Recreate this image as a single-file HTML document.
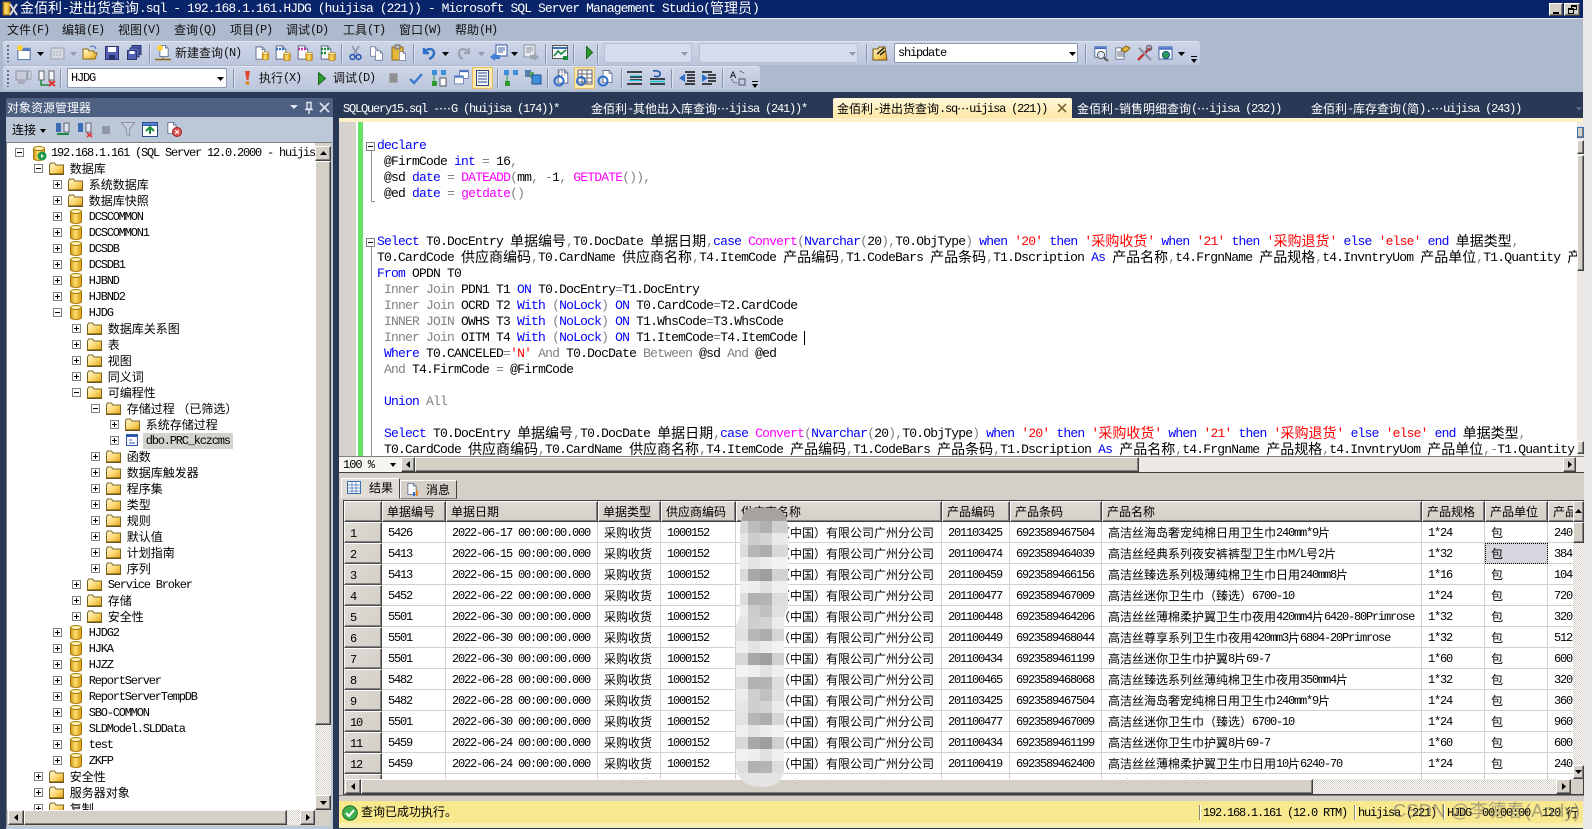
<!DOCTYPE html>
<html lang="zh"><head><meta charset="utf-8"><title>SSMS</title>
<style>
html,body{margin:0;padding:0}
body{width:1592px;height:829px;overflow:hidden;position:relative;background:#293955;font:12px/16px "Liberation Mono",monospace;letter-spacing:-1.2px;color:#000}
u{text-decoration:none;letter-spacing:0;font:12px "WenQuanYi Zen Hei","Noto Sans CJK SC",sans-serif;line-height:0;position:relative;top:1px}
.a{position:absolute;white-space:pre}
.bx{position:absolute;box-sizing:border-box}
svg{position:absolute;overflow:visible}
/* toolbars */
.tb{position:absolute;box-sizing:border-box;background:linear-gradient(#cfd6e8,#bcc6dc);border-radius:3px;box-shadow:inset 0 1px #dfe4f0}
.sp{position:absolute;width:1px;height:19px;background:#8794ad;box-shadow:1px 0 #dde2ee}
.gr{position:absolute;width:2px;height:17px;background:repeating-linear-gradient(#5f6f8c 0 2px,transparent 2px 4px)}
.cb{position:absolute;box-sizing:border-box;background:#fff;border:1px solid #8d99b0;border-radius:2px}
.cd{position:absolute;box-sizing:border-box;background:#d6deee;border:1px solid #b4bfd3;border-radius:2px}
.dn{position:absolute;width:7px;height:4px;background:#000;clip-path:polygon(0 0,100% 0,50% 100%)}
.gy{background:#8f9ab0}
/* tree */
#tree{position:absolute;left:7px;top:143px;width:308px;height:667px;overflow:hidden;background:#fff}
.r{position:relative;height:16px;white-space:pre}
.r:first-child{margin-top:2px}
.l0{--l:0}.l1{--l:1}.l2{--l:2}.l3{--l:3}.l4{--l:4}.l5{--l:5}
.x{position:absolute;left:calc(var(--l)*19px + 8px);top:3px;width:9px;height:9px;box-sizing:border-box;border:1px solid #808080;background:#fff}
.x::before{content:"";position:absolute;left:1px;top:3px;width:5px;height:1px;background:#000}
.p::after{content:"";position:absolute;left:3px;top:1px;width:1px;height:5px;background:#000}
.r svg{left:calc(var(--l)*19px + 23px);top:1px}
.r span{position:absolute;left:calc(var(--l)*19px + 43.7px);top:0}
/* classic bevel */
.b{position:absolute;box-sizing:border-box;background:#d4d0c8;border:1px solid;border-color:#fff #404040 #404040 #fff;box-shadow:inset -1px -1px #808080}
.ck{position:absolute;background:repeating-conic-gradient(#fff 0 25%,#d4d0c8 0 50%) 0 0/2px 2px}
.ar{position:absolute;background:#000}
.au{width:7px;height:4px;clip-path:polygon(50% 0,100% 100%,0 100%)}
.ad{width:7px;height:4px;clip-path:polygon(0 0,100% 0,50% 100%)}
.al{width:4px;height:7px;clip-path:polygon(100% 0,100% 100%,0 50%)}
.arr{width:4px;height:7px;clip-path:polygon(0 0,100% 50%,0 100%)}
/* tabs */
.tab{position:absolute;top:101px;color:#fff;white-space:pre;line-height:16px}
.tab u{color:inherit}
/* editor */
.e{position:absolute;left:377px;white-space:pre;line-height:16px;font-size:13px;letter-spacing:-.8px}
.e u{font-size:14px}
.e b{font-weight:normal;color:#00f}.e i{font-style:normal;color:#f0f}.e s{text-decoration:none;color:#808080}.e em{font-style:normal;color:#f00}.e em u{color:#f00}
/* grid */
#g{position:absolute;left:344px;top:501px;width:1229px;height:278px;overflow:hidden;background:#fff}
#g table{border-collapse:separate;border-spacing:0;table-layout:fixed;width:1264px}
#g th,#g td{box-sizing:border-box;padding:0;white-space:pre;overflow:hidden;font-weight:normal;text-align:left}
#g th{height:21px;background:linear-gradient(#dedad4,#d4d0c8);border:1px solid;border-color:#fff #404040 #404040 #fff;padding:1px 0 0 4px;box-shadow:inset -1px -1px #808080}
#g td{height:21px;padding:2px 0 0 6px;border-right:1px solid #d4d0c8;border-bottom:1px solid #d4d0c8}
#g td.h{background:linear-gradient(135deg,#dedad4,#d4d0c8);border:1px solid;border-color:#fff #404040 #505050 #fff;padding:2px 0 0 5px;box-shadow:inset -1px -1px #808080}
#g td.s{padding-left:42px}
#g tr.z td.sel{background:#d6d6de;outline:1px dotted #000;outline-offset:-1px}
</style></head><body>
<svg width="0" height="0" style="position:absolute">
<defs>
<linearGradient id="fg" x1="0" y1="0" x2="1" y2="1"><stop offset="0" stop-color="#fff7d6"/><stop offset=".55" stop-color="#fbd56a"/><stop offset="1" stop-color="#d99a12"/></linearGradient>
<linearGradient id="dg" x1="0" y1="0" x2="1" y2="0"><stop offset="0" stop-color="#c98c0c"/><stop offset=".4" stop-color="#ffdf70"/><stop offset="1" stop-color="#d99a12"/></linearGradient>
<linearGradient id="bl" x1="0" y1="0" x2="0" y2="1"><stop offset="0" stop-color="#6f9ae0"/><stop offset="1" stop-color="#2a55b0"/></linearGradient>
<symbol id="fo" viewBox="0 0 15 13"><path d="M.5 3V12.5H14.5V3H7L5.5 1H1.5Z" fill="url(#fg)" stroke="#7c6320"/><path d="M1 12H14.5" stroke="#5a4310"/></symbol>
<symbol id="db" viewBox="0 0 12 15"><path d="M.5 2.5V12.5C.5 15 11.5 15 11.5 12.5V2.5Z" fill="url(#dg)" stroke="#a87808"/><ellipse cx="6" cy="2.5" rx="5.5" ry="2" fill="#fff2b8" stroke="#a87808"/></symbol>
<symbol id="doc" viewBox="0 0 16 16"><path d="M2.5 .5H10L13.5 4V15.5H2.5Z" fill="#fff" stroke="#4d5f86"/><path d="M10 .5V4H13.5" fill="#c9d3e6" stroke="#4d5f86"/></symbol>
<symbol id="win" viewBox="0 0 16 16"><rect x="1" y="2" width="14" height="13" fill="#fff" stroke="#3d5f9e"/><rect x="1" y="2" width="14" height="3" fill="url(#bl)"/></symbol>
</defs></svg>

<!-- right light strip -->
<div class="bx" style="left:1583px;top:0;width:9px;height:829px;background:#e9e8e6"></div>

<!-- title -->
<div class="bx" style="left:0;top:0;width:1583px;height:18px;background:#0a246a"></div>
<svg style="left:2px;top:1px" width="16" height="16"><rect x="1" y="1" width="7" height="13" fill="url(#dg)" stroke="#8a6a10"/><path d="M8 3L15 14M15 3L8 14" stroke="#ddd" stroke-width="2"/></svg>
<div class="a" style="left:20px;top:1px;color:#fff;font-size:13px;letter-spacing:-.92px"><u style="font-size:14px;color:#fff">金佰利</u>-<u style="font-size:14px;color:#fff">进出货查询</u>.sql - 192.168.1.161.HJDG (huijisa (221)) - Microsoft SQL Server Management Studio(<u style="font-size:14px;color:#fff">管理员</u>)</div>
<div class="b" style="left:1549px;top:3px;width:14px;height:13px"><div class="bx" style="left:3px;top:8px;width:6px;height:2px;background:#000"></div></div>
<div class="b" style="left:1564px;top:3px;width:16px;height:13px"><div class="bx" style="left:6px;top:1px;width:6px;height:5px;border:1px solid #000;border-top-width:2px"></div><div class="bx" style="left:3px;top:4px;width:6px;height:6px;border:1px solid #000;border-top-width:2px;background:#d4d0c8"></div></div>

<!-- menu + toolbars backdrop -->
<div class="bx" style="left:0;top:18px;width:1583px;height:74px;background:#adb9cd;border-top:1px solid #e8ebf2"></div>
<div class="bx" style="left:0;top:92px;width:1583px;height:26px;background:#293955"></div>
<div class="a" style="left:7px;top:22px;color:#111"><u>文件</u>(F)</div>
<div class="a" style="left:62px;top:22px;color:#111"><u>编辑</u>(E)</div>
<div class="a" style="left:118px;top:22px;color:#111"><u>视图</u>(V)</div>
<div class="a" style="left:174px;top:22px;color:#111"><u>查询</u>(Q)</div>
<div class="a" style="left:230px;top:22px;color:#111"><u>项目</u>(P)</div>
<div class="a" style="left:286px;top:22px;color:#111"><u>调试</u>(D)</div>
<div class="a" style="left:343px;top:22px;color:#111"><u>工具</u>(T)</div>
<div class="a" style="left:399px;top:22px;color:#111"><u>窗口</u>(W)</div>
<div class="a" style="left:455px;top:22px;color:#111"><u>帮助</u>(H)</div>

<div class="tb" style="left:3px;top:41px;width:1197px;height:24px"></div>
<div class="tb" style="left:3px;top:66px;width:757px;height:24px"></div>
<div class="gr" style="left:7px;top:45px"></div>
<div class="gr" style="left:7px;top:70px"></div>

<!-- toolbar 1 icons -->
<svg style="left:16px;top:45px" width="16" height="16"><use href="#win" width="14" height="15" x="1" y="1"/><circle cx="4" cy="3" r="3" fill="#fbd23c"/></svg><div class="dn" style="left:37px;top:52px"></div>
<svg style="left:50px;top:46px" width="14" height="14"><rect x="1" y="2" width="13" height="11" fill="#d5d9e2" stroke="#9aa2b2"/><path d="M3 6h9M3 9h9" stroke="#aab" stroke-dasharray="2 1"/></svg><div class="dn gy" style="left:70px;top:52px"></div>
<svg style="left:82px;top:45px" width="16" height="15"><path d="M1 14V4H6L7 6H12V8H15L13 14Z" fill="url(#fg)" stroke="#8a6a10"/><path d="M8 2C11 0 13 1 14 4" fill="none" stroke="#3d6fb5"/></svg>
<svg style="left:105px;top:46px" width="14" height="14"><rect x=".5" y=".5" width="13" height="13" fill="#5160b0" stroke="#2c3470"/><rect x="3" y="1" width="8" height="5" fill="#fff"/><rect x="4" y="9" width="6" height="4" fill="#26306a"/></svg>
<svg style="left:127px;top:45px" width="15" height="15"><rect x="5" y=".5" width="9" height="9" fill="#5160b0" stroke="#2c3470"/><rect x="3" y="3" width="9" height="9" fill="#6170c0" stroke="#2c3470"/><rect x=".5" y="5.5" width="9" height="9" fill="#5160b0" stroke="#2c3470"/><rect x="2.5" y="6" width="5" height="3" fill="#fff"/></svg>
<div class="sp" style="left:149px;top:44px"></div>
<svg style="left:155px;top:45px" width="17" height="16"><use href="#doc" width="12" height="12" x="3" y="0"/><circle cx="5" cy="3" r="3" fill="#fbd23c"/><path d="M0 14.5H16" stroke="#8a6a10" stroke-width="1.5"/><path d="M8 12v3" stroke="#8a6a10"/></svg>
<div class="a" style="left:175px;top:45px;color:#111"><u>新建查询</u>(N)</div>
<svg style="left:254px;top:45px" width="15" height="16"><use href="#doc" width="13" height="16"/><use href="#db" width="7" height="10" x="8" y="6"/></svg>
<svg style="left:274px;top:45px" width="17" height="16"><use href="#doc" width="14" height="15"/><use href="#db" width="8" height="9" x="9" y="7"/><path d="M2 4h9" stroke="#2a6fd0" stroke-width="2.4" stroke-dasharray="2 1"/></svg>
<svg style="left:296px;top:45px" width="17" height="16"><use href="#doc" width="14" height="15"/><use href="#db" width="8" height="9" x="9" y="7"/><path d="M2 4h9" stroke="#c02ab0" stroke-width="2.4" stroke-dasharray="2 1"/></svg>
<svg style="left:319px;top:45px" width="17" height="16"><use href="#doc" width="14" height="15"/><use href="#db" width="8" height="9" x="9" y="7"/><path d="M2 4h9M2 8h5" stroke="#1c8a3c" stroke-width="2.4" stroke-dasharray="2 1"/></svg>
<div class="sp" style="left:341px;top:44px"></div>
<svg style="left:349px;top:45px" width="13" height="16"><path d="M3 1L8 9M10 1L5 9" stroke="#8a94a8" stroke-width="1.6"/><circle cx="3.5" cy="12" r="2.4" fill="none" stroke="#2a55b0" stroke-width="1.6"/><circle cx="9.5" cy="12" r="2.4" fill="none" stroke="#2a55b0" stroke-width="1.6"/></svg>
<svg style="left:369px;top:46px" width="16" height="15"><use href="#doc" width="10" height="11"/><use href="#doc" width="10" height="11" x="5" y="4"/></svg>
<svg style="left:391px;top:45px" width="17" height="16"><rect x="1" y="2" width="11" height="13" fill="#e6b93d" stroke="#8a6a10"/><rect x="4" y="0" width="5" height="4" fill="#bbb" stroke="#666"/><use href="#doc" width="9" height="10" x="7" y="6"/></svg>
<div class="sp" style="left:413px;top:44px"></div>
<svg style="left:421px;top:45px" width="16" height="15"><path d="M3 3V8H8M3.5 7.5C6 3 12 3 13 7C13.5 10 11 13 8 14" fill="none" stroke="#2d6ec8" stroke-width="2.4"/></svg><div class="dn" style="left:442px;top:52px"></div>
<svg style="left:457px;top:45px" width="13" height="15"><path d="M12 3V8H7M11.5 7.5C9 3 3 3 2 7C1.5 10 3 13 6 14" fill="none" stroke="#9aa3b2" stroke-width="2.2"/></svg><div class="dn gy" style="left:478px;top:52px"></div>
<svg style="left:490px;top:45px" width="18" height="16"><rect x="6" y="0" width="11" height="11" fill="#fff" stroke="#2d55a8"/><path d="M8 3h7M8 5h7M8 7h5" stroke="#2d55a8"/><path d="M0 12L5 8V10H10V14H5V16Z" fill="#3d7ed8"/></svg><div class="dn" style="left:511px;top:52px"></div>
<svg style="left:523px;top:45px" width="17" height="16"><rect x="1" y="0" width="11" height="12" fill="#e6e8ee" stroke="#8d95a6"/><path d="M3 3h7M3 5h7M3 7h5" stroke="#8d95a6"/><path d="M16 12L11 8V10H7V14H11V16Z" fill="#9aa3b2"/></svg>
<div class="sp" style="left:545px;top:44px"></div>
<svg style="left:552px;top:45px" width="17" height="16"><rect x=".5" y=".5" width="15" height="13" fill="#f4f6fb" stroke="#555"/><path d="M1 3h14" stroke="#3d6fb5" stroke-width="2"/><path d="M2 11L6 6L9 9L14 5" fill="none" stroke="#1c8a3c" stroke-width="1.6"/><rect x="11" y="11" width="5" height="4" fill="#1c8a3c"/></svg>
<div class="sp" style="left:573px;top:44px"></div>
<svg style="left:586px;top:46px" width="7" height="13"><path d="M.5 .5L6.5 6.5L.5 12.5Z" fill="#2e9a2e" stroke="#1d6b1d"/></svg>
<div class="sp" style="left:597px;top:44px"></div>
<div class="cd" style="left:604px;top:43px;width:88px;height:20px"></div><div class="dn gy" style="left:681px;top:52px"></div>
<div class="cd" style="left:699px;top:43px;width:159px;height:20px"></div><div class="dn gy" style="left:849px;top:52px"></div>
<div class="sp" style="left:866px;top:44px"></div>
<svg style="left:872px;top:45px" width="16" height="16"><path d="M1 15V4H6L7 2H13L15 15Z" fill="url(#fg)" stroke="#6c5210"/><path d="M5 9L12 3M8 10L13 6" stroke="#222" stroke-width="1.5"/></svg>
<div class="cb" style="left:894px;top:43px;width:184px;height:20px"></div>
<div class="a" style="left:898px;top:45px">shipdate</div><div class="dn" style="left:1069px;top:52px"></div>
<div class="sp" style="left:1085px;top:44px"></div>
<svg style="left:1092px;top:45px" width="17" height="17"><use href="#win" width="15" height="13" x="1"/><circle cx="9" cy="10" r="3.6" fill="#dfeaf8" stroke="#555"/><path d="M12 13L16 16" stroke="#555" stroke-width="2"/></svg>
<svg style="left:1114px;top:45px" width="17" height="16"><use href="#doc" width="12" height="15" y="1"/><path d="M3 7h7M3 9h7M3 11h7" stroke="#667"/><path d="M7 5L12 1L16 3L12 7Z" fill="#e6b93d" stroke="#8a6a10"/></svg>
<svg style="left:1136px;top:45px" width="17" height="16"><path d="M2 15L14 3" stroke="#c03030" stroke-width="2.4"/><path d="M3 3L15 15" stroke="#8d95a6" stroke-width="2.4"/><circle cx="13" cy="3" r="2.6" fill="none" stroke="#667" stroke-width="1.4"/></svg>
<svg style="left:1158px;top:45px" width="16" height="16"><use href="#win" width="15" height="15"/><circle cx="8" cy="10" r="3.6" fill="#2e9a5a" stroke="#1d4f9a"/></svg><div class="dn" style="left:1178px;top:52px"></div>
<div class="bx" style="left:1191px;top:56px;width:6px;height:1px;background:#000"></div><div class="dn" style="left:1191px;top:59px;width:6px"></div>

<!-- toolbar 2 -->
<svg style="left:15px;top:70px" width="17" height="16"><rect x="1" y="1" width="11" height="9" fill="#c8ccd6" stroke="#8d95a6"/><rect x="3" y="11" width="7" height="3" fill="#aab"/><rect x="13" y="1" width="3" height="8" fill="#d5d9e2" stroke="#9aa2b2"/></svg>
<svg style="left:38px;top:70px" width="18" height="17"><rect x="1" y="1" width="5" height="9" fill="#f4f6fb" stroke="#666"/><rect x="11" y="1" width="5" height="9" fill="#f4f6fb" stroke="#666"/><path d="M3 10V15H13" fill="none" stroke="#1c8a3c" stroke-width="1.5"/><path d="M11 11L17 16M17 11L11 16" stroke="#e03030" stroke-width="2"/></svg>
<div class="sp" style="left:60px;top:69px"></div>
<div class="cb" style="left:67px;top:68px;width:160px;height:20px"></div>
<div class="a" style="left:71px;top:70px">HJDG</div><div class="dn" style="left:217px;top:77px"></div>
<div class="sp" style="left:233px;top:69px"></div>
<svg style="left:244px;top:70px" width="7" height="16"><path d="M1 1H6L4.5 10H2.5Z" fill="#e04a30"/><circle cx="3.5" cy="13" r="2" fill="#e08a30"/></svg>
<div class="a" style="left:259px;top:70px;color:#111"><u>执行</u>(X)</div>
<svg style="left:318px;top:72px" width="8" height="13"><path d="M.5 .5L7.5 6.5L.5 12.5Z" fill="#2e9a2e" stroke="#1d6b1d"/></svg>
<div class="a" style="left:333px;top:70px;color:#111"><u>调试</u>(D)</div>
<div class="bx" style="left:389px;top:73px;width:9px;height:10px;background:#8f8f8f;border:1px solid #a8a8b0"></div>
<svg style="left:409px;top:72px" width="14" height="13"><path d="M1 7L5 11L13 2" fill="none" stroke="#3a7ad0" stroke-width="2.4"/></svg>
<svg style="left:431px;top:69px" width="16" height="18"><rect x="1" y="1" width="5" height="5" fill="#3d8fd8"/><rect x="10" y="1" width="5" height="5" fill="#3d8fd8"/><rect x="1" y="12" width="5" height="5" fill="#2e9a2e"/><rect x="9" y="9" width="6" height="8" fill="#fff" stroke="#556"/><path d="M3 6V12" stroke="#2e9a2e"/></svg>
<svg style="left:454px;top:69px" width="15" height="17"><use href="#win" width="10" height="10" x="5"/><use href="#win" width="10" height="11" x="0" y="5"/></svg>
<div class="bx" style="left:472px;top:67px;width:21px;height:22px;background:#ffe9ab;border:1px solid #e2bd62"></div>
<svg style="left:476px;top:70px" width="13" height="16"><rect x=".5" y=".5" width="12" height="15" fill="#f4f6fb" stroke="#2d4a88"/><path d="M2 3h9M2 6h9M2 9h9M2 12h9" stroke="#2d4a88"/></svg>
<div class="sp" style="left:497px;top:69px"></div>
<svg style="left:504px;top:69px" width="15" height="18"><rect x="0" y="1" width="5" height="5" fill="#3d8fd8"/><rect x="9" y="1" width="5" height="5" fill="#3d8fd8"/><rect x="1" y="12" width="5" height="5" fill="#2e9a2e"/><path d="M3 6V12" stroke="#2e9a2e"/></svg>
<svg style="left:525px;top:69px" width="17" height="17"><rect x="0" y="1" width="6" height="7" fill="#5a7ca8"/><rect x="5" y="3" width="4" height="6" fill="#5aa85a"/><rect x="7" y="6" width="9" height="9" fill="#3d8fd8" stroke="#1d4f9a"/></svg>
<div class="sp" style="left:547px;top:69px"></div>
<svg style="left:553px;top:69px" width="17" height="18"><use href="#doc" width="14" height="15" x="3"/><path d="M5 3h7M5 6h7" stroke="#667" stroke-dasharray="2 1"/><circle cx="6" cy="12" r="4.5" fill="none" stroke="#2d6ec8" stroke-width="2"/></svg>
<div class="bx" style="left:574px;top:67px;width:21px;height:22px;background:#ffe9ab;border:1px solid #e2bd62"></div>
<svg style="left:576px;top:69px" width="17" height="18"><rect x="2" y="1" width="14" height="14" fill="#fff" stroke="#667"/><path d="M2 5h14M2 9h14M2 13h14M6 1v14M11 1v14" stroke="#667"/><circle cx="5" cy="12" r="4" fill="none" stroke="#2d6ec8" stroke-width="2"/></svg>
<svg style="left:598px;top:69px" width="16" height="18"><use href="#doc" width="13" height="15" x="3"/><circle cx="5" cy="12" r="4.5" fill="none" stroke="#2d6ec8" stroke-width="2"/></svg>
<div class="sp" style="left:621px;top:69px"></div>
<svg style="left:627px;top:71px" width="15" height="14"><path d="M0 1h15M3 6h12M3 9h12M0 13h15" stroke="#111" stroke-width="1.4"/><path d="M3 5h11" stroke="#18c4d4" stroke-width="1"/><path d="M2 9.5h12" stroke="#18c4d4"/></svg>
<svg style="left:650px;top:70px" width="15" height="15"><path d="M3 1C8 0 11 2 10 5C9 7 6 7 4 6" fill="none" stroke="#1f4fa8" stroke-width="1.5"/><path d="M0 9h15M0 14h15" stroke="#111" stroke-width="1.4"/><path d="M0 11.5h15" stroke="#18c4d4" stroke-width="1.4"/></svg>
<div class="sp" style="left:671px;top:69px"></div>
<svg style="left:679px;top:71px" width="17" height="14"><path d="M6 1h10M8 4h8M8 7h8M8 10h8M6 13h10" stroke="#111" stroke-width="1.4"/><path d="M0 7L6 3V11Z" fill="#2d6ec8"/></svg>
<svg style="left:701px;top:71px" width="17" height="14"><path d="M1 1h10M7 4h8M7 7h8M7 10h8M1 13h10" stroke="#111" stroke-width="1.4"/><path d="M7 7L1 3V11Z" fill="#2d6ec8"/></svg>
<div class="sp" style="left:722px;top:69px"></div>
<div class="a" style="left:730px;top:69px;font-size:10px;letter-spacing:0">A</div>
<svg style="left:730px;top:70px" width="16" height="16"><path d="M10 1L14 3M2 9C2 12 4 13 7 13" fill="none" stroke="#556" stroke-dasharray="2 1"/><rect x="9" y="9" width="6" height="6" fill="none" stroke="#556"/></svg>
<div class="bx" style="left:752px;top:81px;width:6px;height:1px;background:#000"></div><div class="dn" style="left:752px;top:84px;width:6px"></div>

<!-- object explorer -->
<div class="bx" style="left:6px;top:98px;width:327px;height:19px;background:#4d6082;border-radius:2px 2px 0 0"></div>
<div class="a" style="left:7px;top:100px;color:#fff"><u style="color:#fff">对象资源管理器</u></div>
<div class="dn" style="left:290px;top:105px;background:#dfe5ef;width:8px"></div>
<svg style="left:304px;top:102px" width="10" height="13"><path d="M3 .5H7V7H3ZM1 7.5H9M5 8V12" fill="none" stroke="#dfe5ef" stroke-width="1.4"/></svg>
<svg style="left:319px;top:102px" width="11" height="11"><path d="M1 1L10 10M10 1L1 10" stroke="#dfe5ef" stroke-width="1.6"/></svg>
<div class="bx" style="left:6px;top:117px;width:327px;height:712px;background:#bcc7d8"></div>
<div class="a" style="left:12px;top:122px"><u>连接</u></div><div class="dn" style="left:40px;top:129px;width:6px"></div>
<svg style="left:55px;top:122px" width="16" height="16"><rect x="1" y="1" width="5" height="9" fill="#3d6fb5"/><rect x="9" y="1" width="5" height="9" fill="#dfe5ef" stroke="#667"/><path d="M2 12h12" stroke="#1c8a3c" stroke-width="2"/></svg>
<svg style="left:77px;top:122px" width="16" height="16"><rect x="1" y="1" width="5" height="9" fill="#3d6fb5"/><rect x="9" y="1" width="5" height="9" fill="#dfe5ef" stroke="#667"/><path d="M10 11L15 15M15 11L10 15" stroke="#e03030" stroke-width="1.6"/></svg>
<div class="bx" style="left:102px;top:126px;width:8px;height:8px;background:#8f97a8"></div>
<svg style="left:121px;top:122px" width="14" height="15"><path d="M.5 .5H13.5L8.5 7V14L5.5 12V7Z" fill="#c8ced9" stroke="#8d95a6"/></svg>
<svg style="left:142px;top:122px" width="16" height="15"><rect x=".5" y=".5" width="15" height="14" fill="#fff" stroke="#2d4a88"/><rect x="1" y="1" width="14" height="3" fill="url(#bl)"/><path d="M4 9L8 5L12 9M8 6V12" fill="none" stroke="#1c8a3c" stroke-width="2"/></svg>
<svg style="left:166px;top:122px" width="16" height="15"><use href="#doc" width="12" height="12"/><circle cx="11" cy="10" r="4.5" fill="#e05050" stroke="#a02020"/><path d="M9 8L13 12M13 8L9 12" stroke="#fff"/></svg>

<div id="tree">
<div class="r l0"><i class="x"></i><svg width="14" height="15" style="left:26px"><use href="#db" width="12" height="15"/><circle cx="9" cy="10" r="4.5" fill="#1e9a46"/><path d="M8 8L11 10L8 12Z" fill="#fff"/></svg><span style="left:44px">192.168.1.161 (SQL Server 12.0.2000 - huijisa</span></div>
<div class="r l1"><i class="x"></i><svg width="15" height="13"><use href="#fo"/></svg><span><u>数据库</u></span></div>
<div class="r l2"><i class="x p"></i><svg width="15" height="13"><use href="#fo"/></svg><span><u>系统数据库</u></span></div>
<div class="r l2"><i class="x p"></i><svg width="15" height="13"><use href="#fo"/></svg><span><u>数据库快照</u></span></div>
<div class="r l2"><i class="x p"></i><svg width="12" height="15" style="top:0;margin-left:2px"><use href="#db"/></svg><span>DCSCOMMON</span></div>
<div class="r l2"><i class="x p"></i><svg width="12" height="15" style="top:0;margin-left:2px"><use href="#db"/></svg><span>DCSCOMMON1</span></div>
<div class="r l2"><i class="x p"></i><svg width="12" height="15" style="top:0;margin-left:2px"><use href="#db"/></svg><span>DCSDB</span></div>
<div class="r l2"><i class="x p"></i><svg width="12" height="15" style="top:0;margin-left:2px"><use href="#db"/></svg><span>DCSDB1</span></div>
<div class="r l2"><i class="x p"></i><svg width="12" height="15" style="top:0;margin-left:2px"><use href="#db"/></svg><span>HJBND</span></div>
<div class="r l2"><i class="x p"></i><svg width="12" height="15" style="top:0;margin-left:2px"><use href="#db"/></svg><span>HJBND2</span></div>
<div class="r l2"><i class="x"></i><svg width="12" height="15" style="top:0;margin-left:2px"><use href="#db"/></svg><span>HJDG</span></div>
<div class="r l3"><i class="x p"></i><svg width="15" height="13"><use href="#fo"/></svg><span><u>数据库关系图</u></span></div>
<div class="r l3"><i class="x p"></i><svg width="15" height="13"><use href="#fo"/></svg><span><u>表</u></span></div>
<div class="r l3"><i class="x p"></i><svg width="15" height="13"><use href="#fo"/></svg><span><u>视图</u></span></div>
<div class="r l3"><i class="x p"></i><svg width="15" height="13"><use href="#fo"/></svg><span><u>同义词</u></span></div>
<div class="r l3"><i class="x"></i><svg width="15" height="13"><use href="#fo"/></svg><span><u>可编程性</u></span></div>
<div class="r l4"><i class="x"></i><svg width="15" height="13"><use href="#fo"/></svg><span><u>存储过程 （已筛选）</u></span></div>
<div class="r l5"><i class="x p"></i><svg width="15" height="13"><use href="#fo"/></svg><span><u>系统存储过程</u></span></div>
<div class="r l5"><i class="x p"></i><svg width="13" height="13" style="margin-left:1px"><rect x=".5" y=".5" width="11" height="11" fill="#fff" stroke="#2d55a8"/><rect x="1" y="1" width="10" height="2" fill="#2d55a8"/><path d="M3 6h3M3 9h6" stroke="#2d55a8"/></svg><span style="background:#d4d2ce;padding:0 3px;margin-left:-3px;height:16px">dbo.PRC_kczcms</span></div>
<div class="r l4"><i class="x p"></i><svg width="15" height="13"><use href="#fo"/></svg><span><u>函数</u></span></div>
<div class="r l4"><i class="x p"></i><svg width="15" height="13"><use href="#fo"/></svg><span><u>数据库触发器</u></span></div>
<div class="r l4"><i class="x p"></i><svg width="15" height="13"><use href="#fo"/></svg><span><u>程序集</u></span></div>
<div class="r l4"><i class="x p"></i><svg width="15" height="13"><use href="#fo"/></svg><span><u>类型</u></span></div>
<div class="r l4"><i class="x p"></i><svg width="15" height="13"><use href="#fo"/></svg><span><u>规则</u></span></div>
<div class="r l4"><i class="x p"></i><svg width="15" height="13"><use href="#fo"/></svg><span><u>默认值</u></span></div>
<div class="r l4"><i class="x p"></i><svg width="15" height="13"><use href="#fo"/></svg><span><u>计划指南</u></span></div>
<div class="r l4"><i class="x p"></i><svg width="15" height="13"><use href="#fo"/></svg><span><u>序列</u></span></div>
<div class="r l3"><i class="x p"></i><svg width="15" height="13"><use href="#fo"/></svg><span>Service Broker</span></div>
<div class="r l3"><i class="x p"></i><svg width="15" height="13"><use href="#fo"/></svg><span><u>存储</u></span></div>
<div class="r l3"><i class="x p"></i><svg width="15" height="13"><use href="#fo"/></svg><span><u>安全性</u></span></div>
<div class="r l2"><i class="x p"></i><svg width="12" height="15" style="top:0;margin-left:2px"><use href="#db"/></svg><span>HJDG2</span></div>
<div class="r l2"><i class="x p"></i><svg width="12" height="15" style="top:0;margin-left:2px"><use href="#db"/></svg><span>HJKA</span></div>
<div class="r l2"><i class="x p"></i><svg width="12" height="15" style="top:0;margin-left:2px"><use href="#db"/></svg><span>HJZZ</span></div>
<div class="r l2"><i class="x p"></i><svg width="12" height="15" style="top:0;margin-left:2px"><use href="#db"/></svg><span>ReportServer</span></div>
<div class="r l2"><i class="x p"></i><svg width="12" height="15" style="top:0;margin-left:2px"><use href="#db"/></svg><span>ReportServerTempDB</span></div>
<div class="r l2"><i class="x p"></i><svg width="12" height="15" style="top:0;margin-left:2px"><use href="#db"/></svg><span>SBO-COMMON</span></div>
<div class="r l2"><i class="x p"></i><svg width="12" height="15" style="top:0;margin-left:2px"><use href="#db"/></svg><span>SLDModel.SLDData</span></div>
<div class="r l2"><i class="x p"></i><svg width="12" height="15" style="top:0;margin-left:2px"><use href="#db"/></svg><span>test</span></div>
<div class="r l2"><i class="x p"></i><svg width="12" height="15" style="top:0;margin-left:2px"><use href="#db"/></svg><span>ZKFP</span></div>
<div class="r l1"><i class="x p"></i><svg width="15" height="13"><use href="#fo"/></svg><span><u>安全性</u></span></div>
<div class="r l1"><i class="x p"></i><svg width="15" height="13"><use href="#fo"/></svg><span><u>服务器对象</u></span></div>
<div class="r l1"><i class="x p"></i><svg width="15" height="13"><use href="#fo"/></svg><span><u>复制</u></span></div>
</div>
<div class="bx" style="left:6px;top:142px;width:326px;height:1px;background:#808080"></div>
<div class="bx" style="left:6px;top:143px;width:1px;height:683px;background:#808080"></div>
<!-- tree scrollbars -->
<div class="bx" style="left:315px;top:143px;width:16px;height:667px;background:#d4d0c8"></div>
<div class="b" style="left:315px;top:146px;width:16px;height:15px"><div class="ar au" style="left:4px;top:4px"></div></div>
<div class="b" style="left:315px;top:161px;width:16px;height:564px"></div>
<div class="ck" style="left:315px;top:725px;width:16px;height:70px"></div>
<div class="b" style="left:315px;top:795px;width:16px;height:15px"><div class="ar ad" style="left:4px;top:5px"></div></div>
<div class="bx" style="left:7px;top:810px;width:324px;height:16px;background:#d4d0c8"></div>
<div class="b" style="left:8px;top:810px;width:16px;height:15px"><div class="ar al" style="left:5px;top:3px"></div></div>
<div class="b" style="left:24px;top:810px;width:263px;height:15px"></div>
<div class="ck" style="left:287px;top:810px;width:13px;height:15px"></div>
<div class="b" style="left:300px;top:810px;width:15px;height:15px"><div class="ar arr" style="left:5px;top:3px"></div></div>

<!-- document tabs -->
<div class="tab" style="left:343px">SQLQuery15.sql -<u>⋯</u>G (huijisa (174))*</div>
<div class="tab" style="left:591px"><u>金佰利</u>-<u>其他出入库查询⋯</u>ijisa (241))*</div>
<div class="bx" style="left:833px;top:98px;width:239px;height:20px;background:linear-gradient(#fff8dc,#ffe8a6);border-radius:2px 2px 0 0"></div>
<div class="tab" style="left:837px;color:#000"><u>金佰利</u>-<u>进出货查询</u>.sq<u>⋯</u>uijisa (221))</div>
<svg style="left:1057px;top:103px" width="10" height="10"><path d="M1 1L9 9M9 1L1 9" stroke="#7a6a3a" stroke-width="1.6"/></svg>
<div class="tab" style="left:1077px"><u>金佰利</u>-<u>销售明细查询</u>(<u>⋯</u>ijisa (232))</div>
<div class="tab" style="left:1311px"><u>金佰利</u>-<u>库存查询</u>(<u>简</u>).<u>⋯</u>uijisa (243))</div>
<div class="dn" style="left:1576px;top:107px;width:6px;background:#5a6a86"></div>

<!-- editor -->
<div class="bx" style="left:339px;top:118px;width:1244px;height:4px;background:#fff2c9"></div>
<div class="bx" style="left:339px;top:122px;width:1238px;height:334px;background:#fff;overflow:hidden" id="ed"></div>
<div class="bx" style="left:339px;top:122px;width:17px;height:334px;background:#d6d3ce"></div>
<div class="bx" style="left:358px;top:122px;width:5px;height:334px;background:#66e366"></div>
<div class="bx" style="left:371px;top:146px;width:1px;height:55px;background:#909090"></div>
<div class="bx" style="left:371px;top:201px;width:4px;height:1px;background:#909090"></div>
<div class="bx" style="left:371px;top:242px;width:1px;height:214px;background:#909090"></div>
<div class="x" style="--l:0;left:366px;top:142px"></div>
<div class="x" style="--l:0;left:366px;top:238px"></div>
<div style="position:absolute;left:0;top:0;width:1577px;height:456px;overflow:hidden">
<div class="e" style="top:138px"><b>declare</b></div>
<div class="e" style="top:154px"> @FirmCode <b>int</b> <s>=</s> 16<s>,</s></div>
<div class="e" style="top:170px"> @sd <b>date</b> <s>=</s> <i>DATEADD</i><s>(</s>mm<s>,</s> <s>-</s>1<s>,</s> <i>GETDATE</i><s>()),</s></div>
<div class="e" style="top:186px"> @ed <b>date</b> <s>=</s> <i>getdate</i><s>()</s></div>
<div class="e" style="top:234px"><b>Select</b> T0.DocEntry <u>单据编号</u><s>,</s>T0.DocDate <u>单据日期</u><s>,</s><b>case</b> <i>Convert</i><s>(</s><b>Nvarchar</b><s>(</s>20<s>),</s>T0.ObjType<s>)</s> <b>when</b> <em>'20'</em> <b>then</b> <em>'<u>采购收货</u>'</em> <b>when</b> <em>'21'</em> <b>then</b> <em>'<u>采购退货</u>'</em> <b>else</b> <em>'else'</em> <b>end</b> <u>单据类型</u><s>,</s></div>
<div class="e" style="top:250px">T0.CardCode <u>供应商编码</u><s>,</s>T0.CardName <u>供应商名称</u><s>,</s>T4.ItemCode <u>产品编码</u><s>,</s>T1.CodeBars <u>产品条码</u><s>,</s>T1.Dscription <b>As</b> <u>产品名称</u><s>,</s>t4.FrgnName <u>产品规格</u><s>,</s>t4.InvntryUom <u>产品单位</u><s>,</s>T1.Quantity <u>产</u></div>
<div class="e" style="top:266px"><b>From</b> OPDN T0</div>
<div class="e" style="top:282px"> <s>Inner Join</s> PDN1 T1 <b>ON</b> T0.DocEntry<s>=</s>T1.DocEntry</div>
<div class="e" style="top:298px"> <s>Inner Join</s> OCRD T2 <b>With</b> <s>(</s><b>NoLock</b><s>)</s> <b>ON</b> T0.CardCode<s>=</s>T2.CardCode</div>
<div class="e" style="top:314px"> <s>INNER JOIN</s> OWHS T3 <b>With</b> <s>(</s><b>NoLock</b><s>)</s> <b>ON</b> T1.WhsCode<s>=</s>T3.WhsCode</div>
<div class="e" style="top:330px"> <s>Inner Join</s> OITM T4 <b>With</b> <s>(</s><b>NoLock</b><s>)</s> <b>ON</b> T1.ItemCode<s>=</s>T4.ItemCode</div>
<div class="e" style="top:346px"> <b>Where</b> T0.CANCELED<s>=</s><em>'N'</em> <s>And</s> T0.DocDate <s>Between</s> @sd <s>And</s> @ed</div>
<div class="e" style="top:362px"> <s>And</s> T4.FirmCode <s>=</s> @FirmCode</div>
<div class="e" style="top:394px"> <b>Union</b> <s>All</s></div>
<div class="e" style="top:426px"> <b>Select</b> T0.DocEntry <u>单据编号</u><s>,</s>T0.DocDate <u>单据日期</u><s>,</s><b>case</b> <i>Convert</i><s>(</s><b>Nvarchar</b><s>(</s>20<s>),</s>T0.ObjType<s>)</s> <b>when</b> <em>'20'</em> <b>then</b> <em>'<u>采购收货</u>'</em> <b>when</b> <em>'21'</em> <b>then</b> <em>'<u>采购退货</u>'</em> <b>else</b> <em>'else'</em> <b>end</b> <u>单据类型</u><s>,</s></div>
<div class="e" style="top:442px"> T0.CardCode <u>供应商编码</u><s>,</s>T0.CardName <u>供应商名称</u><s>,</s>T4.ItemCode <u>产品编码</u><s>,</s>T1.CodeBars <u>产品条码</u><s>,</s>T1.Dscription <b>As</b> <u>产品名称</u><s>,</s>t4.FrgnName <u>产品规格</u><s>,</s>t4.InvntryUom <u>产品单位</u><s>,-</s>T1.Quantity</div>
</div>
<div class="bx" style="left:804px;top:331px;width:1px;height:14px;background:#000"></div>
<!-- editor v scroll -->
<div class="bx" style="left:1577px;top:122px;width:7px;height:334px;background:#ece9e4"></div>
<div class="b" style="left:1577px;top:127px;width:7px;height:11px;border-color:#3d6fb5"></div>
<div class="b" style="left:1577px;top:140px;width:7px;height:14px"></div>
<div class="b" style="left:1577px;top:155px;width:7px;height:116px"></div>
<div class="b" style="left:1577px;top:441px;width:7px;height:13px"></div>
<!-- editor h scroll -->
<div class="bx" style="left:339px;top:456px;width:1245px;height:16px;background:#ece9e4;border-top:1px solid #808080"></div>
<div class="bx" style="left:339px;top:457px;width:62px;height:15px;background:#f6f5f1"></div>
<div class="a" style="left:343px;top:457px;letter-spacing:-1px">100 %</div>
<div class="dn" style="left:390px;top:463px;width:6px"></div>
<div class="b" style="left:401px;top:457px;width:14px;height:15px"><div class="ar al" style="left:4px;top:3px"></div></div>
<div class="b" style="left:415px;top:457px;width:724px;height:15px"></div>
<div class="b" style="left:1563px;top:457px;width:13px;height:15px"><div class="ar arr" style="left:4px;top:3px"></div></div>

<!-- results pane -->
<div class="bx" style="left:339px;top:472px;width:1245px;height:329px;background:#d4d0c8;border-top:1px solid #404040"></div>
<div class="bx" style="left:341px;top:478px;width:59px;height:21px;background:#e0ddd6;border:1px solid;border-color:#fff #404040 #d4d0c8 #fff"></div>
<div class="bx" style="left:400px;top:480px;width:57px;height:19px;background:#d4d0c8;border:1px solid;border-color:#fff #404040 #808080 #fff"></div>
<svg style="left:347px;top:481px" width="14" height="13"><rect x=".5" y=".5" width="13" height="12" fill="#fff" stroke="#3d6fb5"/><path d="M1 4h12M1 7h12M1 10h12M5 1v11M9 1v11" stroke="#6f8fc8"/></svg>
<div class="a" style="left:369px;top:480px"><u>结果</u></div>
<svg style="left:406px;top:482px" width="14" height="16"><use href="#doc" width="12" height="14"/><rect x="7" y="10" width="2" height="4" fill="#2d6ec8"/><rect x="10" y="8" width="2" height="6" fill="#e08a30"/></svg>
<div class="a" style="left:426px;top:482px"><u>消息</u></div>

<div class="bx" style="left:343px;top:500px;height:295px;background:#d4d0c8;border:1px solid #404040;width:1241px"></div>
<div id="g">
<table>
<colgroup><col style="width:38px"><col style="width:64px"><col style="width:152px"><col style="width:63px"><col style="width:75px"><col style="width:206px"><col style="width:68px"><col style="width:92px"><col style="width:320px"><col style="width:63px"><col style="width:63px"><col style="width:60px"></colgroup>
<tr><th></th><th><u>单据编号</u></th><th><u>单据日期</u></th><th><u>单据类型</u></th><th><u>供应商编码</u></th><th><u>供应商名称</u></th><th><u>产品编码</u></th><th><u>产品条码</u></th><th><u>产品名称</u></th><th><u>产品规格</u></th><th><u>产品单位</u></th><th><u>产品数量</u></th></tr>
<tr><td class="h">1</td><td>5426</td><td>2022-06-17 00:00:00.000</td><td><u>采购收货</u></td><td>1000152</td><td class="s"><u>（中国）有限公司广州分公司</u></td><td>201103425</td><td>6923589467504</td><td><u>高洁丝海岛奢宠纯棉日用卫生巾</u>240mm*9<u>片</u></td><td>1*24</td><td><u>包</u></td><td>240</td></tr>
<tr class="z"><td class="h">2</td><td>5413</td><td>2022-06-15 00:00:00.000</td><td><u>采购收货</u></td><td>1000152</td><td class="s"><u>（中国）有限公司广州分公司</u></td><td>201100474</td><td>6923589464039</td><td><u>高洁丝经典系列夜安裤裤型卫生巾</u>M/L<u>号</u>2<u>片</u></td><td>1*32</td><td class="sel"><u>包</u></td><td>384</td></tr>
<tr><td class="h">3</td><td>5413</td><td>2022-06-15 00:00:00.000</td><td><u>采购收货</u></td><td>1000152</td><td class="s"><u>（中国）有限公司广州分公司</u></td><td>201100459</td><td>6923589466156</td><td><u>高洁丝臻选系列极薄纯棉卫生巾日用</u>240mm8<u>片</u></td><td>1*16</td><td><u>包</u></td><td>104</td></tr>
<tr><td class="h">4</td><td>5452</td><td>2022-06-22 00:00:00.000</td><td><u>采购收货</u></td><td>1000152</td><td class="s"><u>（中国）有限公司广州分公司</u></td><td>201100477</td><td>6923589467009</td><td><u>高洁丝迷你卫生巾（臻选）</u>6700-10</td><td>1*24</td><td><u>包</u></td><td>720</td></tr>
<tr><td class="h">5</td><td>5501</td><td>2022-06-30 00:00:00.000</td><td><u>采购收货</u></td><td>1000152</td><td class="s"><u>（中国）有限公司广州分公司</u></td><td>201100448</td><td>6923589464206</td><td><u>高洁丝丝薄棉柔护翼卫生巾夜用</u>420mm4<u>片</u>6420-80Primrose</td><td>1*32</td><td><u>包</u></td><td>320</td></tr>
<tr><td class="h">6</td><td>5501</td><td>2022-06-30 00:00:00.000</td><td><u>采购收货</u></td><td>1000152</td><td class="s"><u>（中国）有限公司广州分公司</u></td><td>201100449</td><td>6923589468044</td><td><u>高洁丝尊享系列卫生巾夜用</u>420mm3<u>片</u>6804-20Primrose</td><td>1*32</td><td><u>包</u></td><td>512</td></tr>
<tr><td class="h">7</td><td>5501</td><td>2022-06-30 00:00:00.000</td><td><u>采购收货</u></td><td>1000152</td><td class="s"><u>（中国）有限公司广州分公司</u></td><td>201100434</td><td>6923589461199</td><td><u>高洁丝迷你卫生巾护翼</u>8<u>片</u>69-7</td><td>1*60</td><td><u>包</u></td><td>600</td></tr>
<tr><td class="h">8</td><td>5482</td><td>2022-06-28 00:00:00.000</td><td><u>采购收货</u></td><td>1000152</td><td class="s"><u>（中国）有限公司广州分公司</u></td><td>201100465</td><td>6923589468068</td><td><u>高洁丝臻选系列丝薄纯棉卫生巾夜用</u>350mm4<u>片</u></td><td>1*32</td><td><u>包</u></td><td>320</td></tr>
<tr><td class="h">9</td><td>5482</td><td>2022-06-28 00:00:00.000</td><td><u>采购收货</u></td><td>1000152</td><td class="s"><u>（中国）有限公司广州分公司</u></td><td>201103425</td><td>6923589467504</td><td><u>高洁丝海岛奢宠纯棉日用卫生巾</u>240mm*9<u>片</u></td><td>1*24</td><td><u>包</u></td><td>360</td></tr>
<tr><td class="h">10</td><td>5501</td><td>2022-06-30 00:00:00.000</td><td><u>采购收货</u></td><td>1000152</td><td class="s"><u>（中国）有限公司广州分公司</u></td><td>201100477</td><td>6923589467009</td><td><u>高洁丝迷你卫生巾（臻选）</u>6700-10</td><td>1*24</td><td><u>包</u></td><td>960</td></tr>
<tr><td class="h">11</td><td>5459</td><td>2022-06-24 00:00:00.000</td><td><u>采购收货</u></td><td>1000152</td><td class="s"><u>（中国）有限公司广州分公司</u></td><td>201100434</td><td>6923589461199</td><td><u>高洁丝迷你卫生巾护翼</u>8<u>片</u>69-7</td><td>1*60</td><td><u>包</u></td><td>600</td></tr>
<tr><td class="h">12</td><td>5459</td><td>2022-06-24 00:00:00.000</td><td><u>采购收货</u></td><td>1000152</td><td class="s"><u>（中国）有限公司广州分公司</u></td><td>201100419</td><td>6923589462400</td><td><u>高洁丝丝薄棉柔护翼卫生巾日用</u>10<u>片</u>6240-70</td><td>1*24</td><td><u>包</u></td><td>240</td></tr>
<tr><td class="h"></td><td></td><td></td><td><u>采购收货</u></td><td></td><td class="s"><u>（中国）有限公司广州分公司</u></td><td></td><td></td><td><u>高洁丝迷你卫生巾护翼</u></td><td></td><td></td><td></td></tr>
</table>
</div>
<!-- grid scrollbars -->
<div class="b" style="left:1573px;top:501px;width:11px;height:21px"><div class="ar au" style="left:1px;top:7px"></div></div>
<div class="b" style="left:1573px;top:522px;width:11px;height:21px"></div>
<div class="ck" style="left:1573px;top:543px;width:11px;height:222px"></div>
<div class="b" style="left:1573px;top:765px;width:11px;height:14px"><div class="ar ad" style="left:1px;top:4px"></div></div>
<div class="b" style="left:345px;top:779px;width:16px;height:15px"><div class="ar al" style="left:5px;top:3px"></div></div>
<div class="b" style="left:361px;top:779px;width:952px;height:15px"></div>
<div class="ck" style="left:1313px;top:779px;width:243px;height:15px"></div>
<div class="b" style="left:1556px;top:779px;width:15px;height:15px"><div class="ar arr" style="left:5px;top:3px"></div></div>
<div class="bx" style="left:339px;top:795px;width:1245px;height:6px;background:#d4d0c8;border-top:1px solid #808080"></div>

<!-- mosaic -->
<svg style="left:736px;top:508px" width="52" height="280" viewBox="0 0 52 280" shape-rendering="crispEdges">
<defs><clipPath id="mc"><path d="M14 0H38Q52 2 52 22V100Q49 104 48 110V262Q46 279 26 279Q2 279 0 258V118L4 108V20Q6 2 14 0Z"/></clipPath></defs>
<g clip-path="url(#mc)">
<rect width="52" height="280" fill="#e4e4e2"/>
<rect width="52" height="13" fill="#a8a3a0"/>
<rect x="0" y="13" width="12" height="12" fill="#d8d8d8"/><rect x="12" y="13" width="12" height="12" fill="#bbbdbd"/><rect x="24" y="13" width="12" height="12" fill="#b0b0b0"/><rect x="36" y="13" width="16" height="12" fill="#cfcfcf"/>
<rect x="0" y="25" width="12" height="12" fill="#e5e5e5"/><rect x="12" y="25" width="12" height="12" fill="#cdcdcd"/><rect x="24" y="25" width="12" height="12" fill="#d4d4d4"/><rect x="36" y="25" width="16" height="12" fill="#e9e9e9"/>
<rect x="0" y="37" width="12" height="12" fill="#dcdcdc"/><rect x="12" y="37" width="12" height="12" fill="#b7b7b7"/><rect x="24" y="37" width="12" height="12" fill="#adadad"/><rect x="36" y="37" width="16" height="12" fill="#d8d8d8"/>
<rect x="0" y="49" width="12" height="12" fill="#efefef"/><rect x="12" y="49" width="12" height="12" fill="#e3e3e3"/><rect x="24" y="49" width="12" height="12" fill="#ebebeb"/><rect x="36" y="49" width="16" height="12" fill="#f2f2f2"/>
<rect x="0" y="61" width="12" height="12" fill="#dadada"/><rect x="12" y="61" width="12" height="12" fill="#a8a8a8"/><rect x="24" y="61" width="12" height="12" fill="#9e9e9e"/><rect x="36" y="61" width="16" height="12" fill="#d2d2d2"/>
<rect x="0" y="73" width="12" height="12" fill="#f0f0f0"/><rect x="12" y="73" width="12" height="12" fill="#ededed"/><rect x="24" y="73" width="12" height="12" fill="#e2e2e2"/><rect x="36" y="73" width="16" height="12" fill="#efefef"/>
<rect x="0" y="85" width="12" height="12" fill="#dedede"/><rect x="12" y="85" width="12" height="12" fill="#b2b2b2"/><rect x="24" y="85" width="12" height="12" fill="#b4b4b4"/><rect x="36" y="85" width="16" height="12" fill="#dddddd"/>
<rect x="0" y="97" width="12" height="12" fill="#ececec"/><rect x="12" y="97" width="12" height="12" fill="#cbcbcb"/><rect x="24" y="97" width="12" height="12" fill="#c0c0c0"/><rect x="36" y="97" width="16" height="12" fill="#e0e0e0"/>
<rect x="0" y="109" width="12" height="12" fill="#e6e6e4"/><rect x="12" y="109" width="12" height="12" fill="#cfcfcd"/><rect x="24" y="109" width="12" height="12" fill="#d4d4d2"/><rect x="36" y="109" width="16" height="12" fill="#ebebeb"/>
<rect x="0" y="121" width="12" height="12" fill="#e2e2e0"/><rect x="12" y="121" width="12" height="12" fill="#b7b7b7"/><rect x="24" y="121" width="12" height="12" fill="#adadad"/><rect x="36" y="121" width="16" height="12" fill="#d5d5d5"/>
<rect x="0" y="133" width="12" height="12" fill="#efefed"/><rect x="12" y="133" width="12" height="12" fill="#e3e3e3"/><rect x="24" y="133" width="12" height="12" fill="#ebebeb"/><rect x="36" y="133" width="16" height="12" fill="#f2f2f2"/>
<rect x="0" y="145" width="12" height="12" fill="#d8d8d8"/><rect x="12" y="145" width="12" height="12" fill="#a8a8a8"/><rect x="24" y="145" width="12" height="12" fill="#9e9e9e"/><rect x="36" y="145" width="16" height="12" fill="#d0d0d0"/>
<rect x="0" y="157" width="12" height="12" fill="#f2f2f0"/><rect x="12" y="157" width="12" height="12" fill="#eeeeee"/><rect x="24" y="157" width="12" height="12" fill="#e2e2e2"/><rect x="36" y="157" width="16" height="12" fill="#efefef"/>
<rect x="0" y="169" width="12" height="12" fill="#dedede"/><rect x="12" y="169" width="12" height="12" fill="#b2b2b2"/><rect x="24" y="169" width="12" height="12" fill="#b4b4b4"/><rect x="36" y="169" width="16" height="12" fill="#dddddd"/>
<rect x="0" y="181" width="12" height="12" fill="#ececec"/><rect x="12" y="181" width="12" height="12" fill="#cfcfcf"/><rect x="24" y="181" width="12" height="12" fill="#c1c1c1"/><rect x="36" y="181" width="16" height="12" fill="#e0e0e0"/>
<rect x="0" y="193" width="12" height="12" fill="#e6e6e4"/><rect x="12" y="193" width="12" height="12" fill="#cfcfcd"/><rect x="24" y="193" width="12" height="12" fill="#d4d4d2"/><rect x="36" y="193" width="16" height="12" fill="#ebebeb"/>
<rect x="0" y="205" width="12" height="12" fill="#e2e2e0"/><rect x="12" y="205" width="12" height="12" fill="#b7b7b7"/><rect x="24" y="205" width="12" height="12" fill="#adadad"/><rect x="36" y="205" width="16" height="12" fill="#d5d5d5"/>
<rect x="0" y="217" width="12" height="12" fill="#efefed"/><rect x="12" y="217" width="12" height="12" fill="#e3e3e3"/><rect x="24" y="217" width="12" height="12" fill="#ebebeb"/><rect x="36" y="217" width="16" height="12" fill="#f2f2f2"/>
<rect x="0" y="229" width="12" height="12" fill="#d8d8d8"/><rect x="12" y="229" width="12" height="12" fill="#a8a8a8"/><rect x="24" y="229" width="12" height="12" fill="#9e9e9e"/><rect x="36" y="229" width="16" height="12" fill="#d0d0d0"/>
<rect x="0" y="241" width="12" height="12" fill="#f2f2f0"/><rect x="12" y="241" width="12" height="12" fill="#eeeeee"/><rect x="24" y="241" width="12" height="12" fill="#e2e2e2"/><rect x="36" y="241" width="16" height="12" fill="#efefef"/>
<rect x="0" y="253" width="12" height="12" fill="#dedede"/><rect x="12" y="253" width="12" height="12" fill="#b2b2b2"/><rect x="24" y="253" width="12" height="12" fill="#b4b4b4"/><rect x="36" y="253" width="16" height="12" fill="#dddddd"/>
</g></svg>

<!-- status bar -->
<div class="bx" style="left:339px;top:801px;width:1244px;height:27px;background:linear-gradient(#f8e88e 0,#f8e88e 82%,#fbf0b4 82%,#fbf0b4 100%)"></div>
<svg style="left:342px;top:805px" width="16" height="16"><circle cx="8" cy="8" r="7.3" fill="#3fae4c" stroke="#1f6d2c"/><path d="M4 8L7 11L12 5" fill="none" stroke="#fff" stroke-width="2"/></svg>
<div class="a" style="left:361px;top:804px"><u>查询已成功执行。</u></div>
<div class="bx" style="left:1199px;top:805px;width:1px;height:15px;background:#8a8a70;box-shadow:1px 0 #fff"></div>
<div class="a" style="left:1203px;top:805px">192.168.1.161 (12.0 RTM)</div>
<div class="bx" style="left:1354px;top:805px;width:1px;height:15px;background:#8a8a70;box-shadow:1px 0 #fff"></div>
<div class="a" style="left:1358px;top:805px">huijisa (221)</div>
<div class="bx" style="left:1443px;top:805px;width:1px;height:15px;background:#8a8a70;box-shadow:1px 0 #fff"></div>
<div class="a" style="left:1447px;top:805px">HJDG</div>
<div class="a" style="left:1482px;top:805px">00:00:00</div>
<div class="a" style="left:1542px;top:805px">120 <u>行</u></div>
<div class="a" style="left:1393px;top:799px;font:18px/22px 'Liberation Sans','WenQuanYi Zen Hei',sans-serif;letter-spacing:.4px;color:rgba(100,100,100,.55)">CSDN @<span style="font-family:'Noto Sans CJK SC',sans-serif">李德春</span>(Andy)</div>
</body></html>
